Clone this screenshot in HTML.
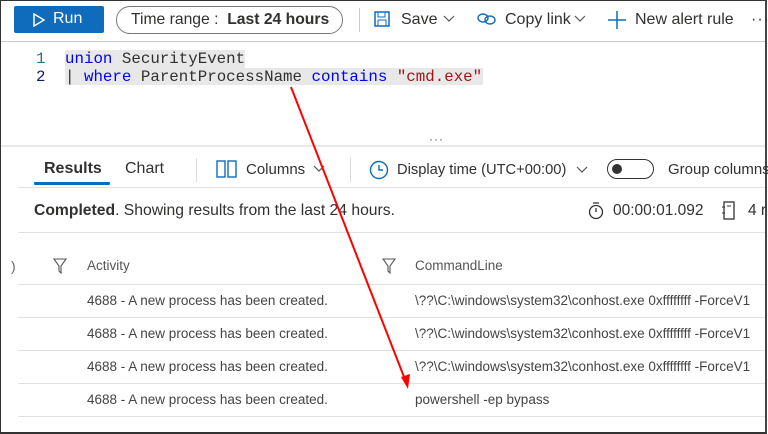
<!DOCTYPE html>
<html><head><style>
body{margin:0;width:768px;height:434px;overflow:hidden;background:#fff;font-family:"Liberation Sans",sans-serif;color:#323130;position:relative}
.frame{position:absolute;left:0;top:0;width:764px;height:431px;border:1px solid #333;border-bottom:2px solid #333;border-right:2px solid #444}
.a{position:absolute;white-space:nowrap}
.hl{position:absolute;background:#e8e8e8}
.mono{font-family:"Liberation Mono",monospace;font-size:15.8px}
.line{position:absolute;height:1px;background:#e1e1e1}
.row{font-size:13.5px;color:#444}
</style></head><body>
<div class="frame"></div>
<div class="a" style="left:14px;top:6px;width:90px;height:27px;background:#0f6cbd;border-radius:2px;color:#fff;font-size:16px">
<svg class="a" style="left:19px;top:7px" width="12" height="14"><path d="M1 1L11 7L1 13Z" fill="none" stroke="#fff" stroke-width="1.5"/></svg>
<span class="a" style="left:39px;top:4px">Run</span></div>
<div class="a" style="left:116px;top:6px;width:225px;height:26px;border:1px solid #777;border-radius:14px;font-size:15.7px"><span class="a" style="left:14px;top:4px">Time range :&nbsp; <b>Last 24 hours</b></span></div>
<div class="a" style="left:359px;top:8px;width:1px;height:24px;background:#ccc"></div>
<svg class="a" style="left:374px;top:11px" width="16" height="16"><rect x="1" y="1" width="14" height="14" fill="none" stroke="#0f6cbd" stroke-width="1.5"/><rect x="4" y="1" width="7" height="5" fill="none" stroke="#0f6cbd"/><rect x="4" y="9" width="8" height="6" fill="none" stroke="#0f6cbd"/></svg>
<span class="a" style="left:401px;top:11px;font-size:16px">Save</span>
<svg class="a" style="left:443px;top:15px" width="12" height="8"><path d="M1 1L6 6L11 1" fill="none" stroke="#555" stroke-width="1.2"/></svg>
<svg class="a" style="left:477px;top:12px" width="20" height="14"><ellipse cx="6" cy="6" rx="5" ry="4" fill="none" stroke="#0f6cbd" stroke-width="1.4"/><ellipse cx="13" cy="8" rx="5" ry="4" fill="none" stroke="#0f6cbd" stroke-width="1.4"/></svg>
<span class="a" style="left:505px;top:11px;font-size:16px">Copy link</span>
<svg class="a" style="left:574px;top:15px" width="12" height="8"><path d="M1 1L6 6L11 1" fill="none" stroke="#555" stroke-width="1.2"/></svg>
<svg class="a" style="left:608px;top:11px" width="18" height="18"><path d="M9 0V18M0 9H18" stroke="#0f6cbd" stroke-width="1.5"/></svg>
<span class="a" style="left:635px;top:11px;font-size:16px">New alert rule</span>
<span class="a" style="left:751px;top:11px;font-size:16px;letter-spacing:1px">···</span>
<div class="line" style="left:1px;top:41px;width:764px;background:#c8c8c8;height:1px"></div>
<div class="hl" style="left:65px;top:50px;width:180px;height:18px"></div>
<div class="hl" style="left:65px;top:68px;width:418px;height:17px"></div>
<span class="a mono" style="left:36px;top:50px;color:#237893">1</span>
<span class="a mono" style="left:36px;top:68px;color:#0b216f">2</span>
<span class="a mono" style="left:65px;top:50px"><span style="color:#0000ff">union</span> SecurityEvent</span>
<span class="a mono" style="left:65px;top:68px">| <span style="color:#0000ff">where</span> ParentProcessName <span style="color:#0000ff">contains</span> <span style="color:#a31515">"cmd.exe"</span></span>
<div class="line" style="left:1px;top:145px;width:764px;background:#e8e8e8;height:2px"></div>
<span class="a" style="left:429px;top:132px;font-size:12px;color:#555;letter-spacing:1px">···</span>
<span class="a" style="left:44px;top:160px;font-size:16px;font-weight:bold">Results</span>
<span class="a" style="left:125px;top:160px;font-size:16px">Chart</span>
<div class="a" style="left:34px;top:182px;width:76px;height:3px;background:#0f6cbd;border-radius:1px"></div>
<div class="a" style="left:196px;top:158px;width:1px;height:24px;background:#ddd"></div>
<svg class="a" style="left:216px;top:160px" width="22" height="18"><rect x="1" y="1" width="8" height="16" fill="none" stroke="#0f6cbd" stroke-width="1.4"/><rect x="12" y="1" width="8" height="16" fill="none" stroke="#0f6cbd" stroke-width="1.4"/></svg>
<span class="a" style="left:246px;top:161px;font-size:15px">Columns</span>
<svg class="a" style="left:313px;top:165px" width="12" height="8"><path d="M1 1L6 6L11 1" fill="none" stroke="#555" stroke-width="1.2"/></svg>
<div class="a" style="left:350px;top:158px;width:1px;height:24px;background:#ddd"></div>
<svg class="a" style="left:369px;top:160px" width="20" height="20"><circle cx="10" cy="10" r="8.5" fill="none" stroke="#0f6cbd" stroke-width="1.4"/><path d="M10 5V10H14" fill="none" stroke="#0f6cbd" stroke-width="1.4"/></svg>
<span class="a" style="left:397px;top:162px;font-size:14.7px">Display time (UTC+00:00)</span>
<svg class="a" style="left:576px;top:166px" width="12" height="8"><path d="M1 1L6 6L11 1" fill="none" stroke="#555" stroke-width="1.2"/></svg>
<div class="a" style="left:607px;top:159px;width:45px;height:18px;border:1.5px solid #333;border-radius:10px"><div class="a" style="left:4px;top:4px;width:10px;height:10px;border-radius:50%;background:#333"></div></div>
<span class="a" style="left:668px;top:161px;font-size:15px">Group columns</span>
<div class="line" style="left:18px;top:187px;width:747px"></div>
<span class="a" style="left:34px;top:202px;font-size:15.7px"><b>Completed</b>. Showing results from the last 24 hours.</span>
<svg class="a" style="left:588px;top:201px" width="16" height="19"><circle cx="8" cy="11" r="6.5" fill="none" stroke="#333" stroke-width="1.3"/><path d="M5 2H11M8 11V7" stroke="#333" stroke-width="1.3"/></svg>
<span class="a" style="left:613px;top:202px;font-size:15.5px">00:00:01.092</span>
<svg class="a" style="left:722px;top:201px" width="14" height="19"><rect x="2" y="1" width="10" height="17" fill="none" stroke="#333" stroke-width="1.3"/><path d="M5 5H9M0 6H3M0 12H3" stroke="#333"/></svg>
<span class="a" style="left:748px;top:202px;font-size:15.5px">4 r</span>
<div class="line" style="left:18px;top:232px;width:747px"></div>
<span class="a" style="left:11px;top:258px;font-size:14px;color:#666">)</span>
<svg class="a" style="left:53px;top:258px" width="14" height="16"><path d="M1 1H13L8 8V15L6 13V8Z" fill="none" stroke="#555" stroke-width="1.1"/></svg>
<span class="a row" style="left:87px;top:258px;color:#555">Activity</span>
<svg class="a" style="left:382px;top:258px" width="14" height="16"><path d="M1 1H13L8 8V15L6 13V8Z" fill="none" stroke="#555" stroke-width="1.1"/></svg>
<span class="a row" style="left:415px;top:258px;color:#555">CommandLine</span>
<div class="line" style="left:18px;top:284px;width:747px"></div>
<span class="a row" style="left:87px;top:293px">4688 - A new process has been created.</span>
<span class="a row" style="left:415px;top:293px">\??\C:\windows\system32\conhost.exe 0xffffffff -ForceV1</span>
<div class="line" style="left:18px;top:317px;width:747px"></div>
<span class="a row" style="left:87px;top:326px">4688 - A new process has been created.</span>
<span class="a row" style="left:415px;top:326px">\??\C:\windows\system32\conhost.exe 0xffffffff -ForceV1</span>
<div class="line" style="left:18px;top:350px;width:747px"></div>
<span class="a row" style="left:87px;top:359px">4688 - A new process has been created.</span>
<span class="a row" style="left:415px;top:359px">\??\C:\windows\system32\conhost.exe 0xffffffff -ForceV1</span>
<div class="line" style="left:18px;top:383px;width:747px"></div>
<span class="a row" style="left:87px;top:392px">4688 - A new process has been created.</span>
<span class="a row" style="left:415px;top:392px">powershell -ep bypass</span>
<div class="line" style="left:18px;top:416px;width:747px"></div>
<svg class="a" style="left:0;top:0" width="768" height="434"><path d="M291 87L406 382" stroke="#f00" stroke-width="2"/><path d="M408 389L401 377L410 374Z" fill="#f00"/></svg>
</body></html>
